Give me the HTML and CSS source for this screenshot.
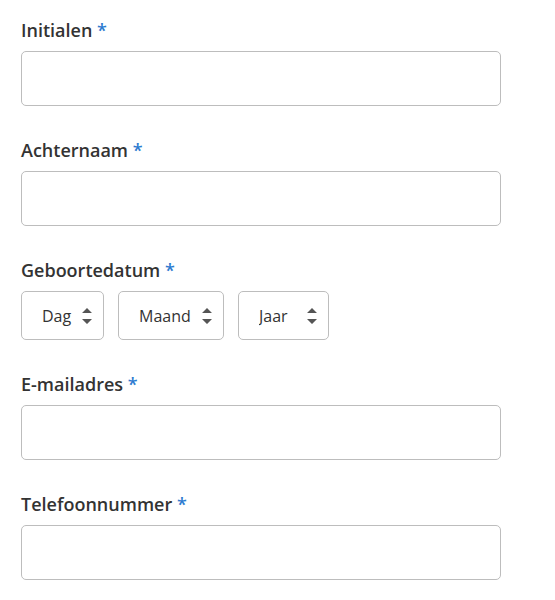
FILE: index.html
```html
<!DOCTYPE html>
<html lang="nl">
<head>
    <meta charset="UTF-8">
    <meta name="viewport" content="width=device-width, initial-scale=1.0">
    <title>Gegevens</title>
    <link rel="stylesheet" href="styles.css">
</head>
<body>
    <form class="form">
        <div class="field">
            <label for="initials">Initialen <span class="req">*</span></label>
            <input type="text" id="initials" class="text-input">
        </div>

        <div class="field">
            <label for="lastname">Achternaam <span class="req">*</span></label>
            <input type="text" id="lastname" class="text-input">
        </div>

        <!-- geboortedatum -->
        <div class="field">
            <label for="day">Geboortedatum <span class="req">*</span></label>
            <div class="date-row">
                <div class="select-wrap select-day">
                    <select id="day">
                        <option>Dag</option>
                    </select>
                    <svg class="arrows" width="10" height="16" viewBox="0 0 10 16"><path d="M5 0 L10 5 L0 5 Z M0 11 L10 11 L5 16 Z" fill="#555"/></svg>
                </div>
                <div class="select-wrap select-month">
                    <select id="month">
                        <option>Maand</option>
                    </select>
                    <svg class="arrows" width="10" height="16" viewBox="0 0 10 16"><path d="M5 0 L10 5 L0 5 Z M0 11 L10 11 L5 16 Z" fill="#555"/></svg>
                </div>
                <div class="select-wrap select-year">
                    <select id="year">
                        <option>Jaar</option>
                    </select>
                    <svg class="arrows" width="10" height="16" viewBox="0 0 10 16"><path d="M5 0 L10 5 L0 5 Z M0 11 L10 11 L5 16 Z" fill="#555"/></svg>
                </div>
            </div>
        </div>

        <div class="field">
            <label for="email">E-mailadres <span class="req">*</span></label>
            <input type="email" id="email" class="text-input">
        </div>

        <div class="field">
            <label for="phone">Telefoonnummer <span class="req">*</span></label>
            <input type="tel" id="phone" class="text-input">
        </div>
    </form>
</body>
</html>
```

FILE: styles.css
```css
body {
    margin: 0;
    font-family: 'Open Sans', 'Noto Sans', sans-serif;
    color: #333;
    background: #fff;
}

.form {
    padding: 18px 21px 16px;
    width: 480px;
}

.field {
    margin-bottom: 32px;
}

.field label {
    display: block;
    font-size: 18px;
    line-height: 25px;
    font-weight: 600;
    color: #333;
    margin-bottom: 8px;
}

.field .req {
    color: #2d7bd0;
}

.text-input {
    display: block;
    box-sizing: border-box;
    width: 480px;
    height: 55px;
    margin: 0;
    padding: 0 14px;
    border: 1px solid #bdbdbd;
    border-radius: 5px;
    font-family: inherit;
    font-size: 16px;
    color: #333;
    background: #fff;
}

.date-row {
    display: flex;
    gap: 14px;
}

.select-wrap {
    position: relative;
}

.select-wrap select {
    appearance: none;
    -webkit-appearance: none;
    box-sizing: border-box;
    width: 100%;
    height: 49px;
    margin: 0;
    padding: 0 0 0 20px;
    border: 1px solid #bdbdbd;
    border-radius: 5px;
    background: #fff;
    font-family: inherit;
    font-size: 16px;
    color: #333;
}

.select-day { width: 83px; }
.select-month { width: 106px; }
.select-year { width: 91px; }

.select-wrap .arrows {
    position: absolute;
    right: 12px;
    top: 17px;
    pointer-events: none;
}
```
